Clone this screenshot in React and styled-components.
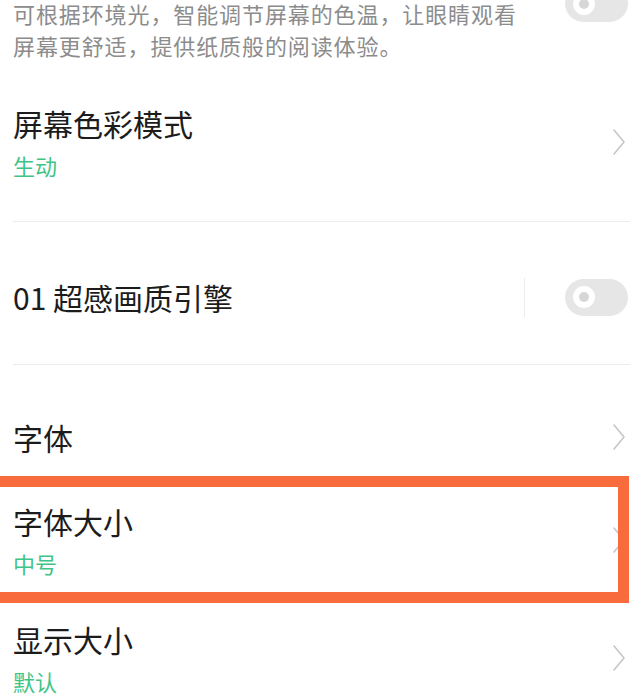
import React from "react";
import styled, { createGlobalStyle } from "styled-components";

const palette = {
  title: "#1c1c1c",
  desc: "#8c8c8c",
  green: "#3fc487",
  line: "#ececec",
  chevron: "#c6c6c6",
  track: "#e6e6e6",
  knobCore: "#d6d6d6",
  mark: "#f76b3c",
};

const GlobalStyle = createGlobalStyle`
  html, body {
    margin: 0;
    padding: 0;
    background: #fff;
    overflow: hidden;
  }
  body {
    font-family: "Noto Sans CJK SC", "Noto Sans", sans-serif;
  }
`;

const Chevron = () => (
  <svg width="14" height="28" viewBox="0 0 14 28" fill="none">
    <polyline
      points="2,2 12,14 2,26"
      stroke={palette.chevron}
      strokeWidth="1.6"
      strokeLinecap="round"
      strokeLinejoin="round"
    />
  </svg>
);

const items = [
  { title: "屏幕色彩模式", value: "生动", top: 42, bottom: 41, line: true },
  { title: "01 超感画质引擎", toggle: true, top: 55, bottom: 47, line: true },
  { title: "字体", top: 52, bottom: 24 },
  { title: "字体大小", value: "中号", top: 19, bottom: 18, line: true, marked: true },
  { title: "显示大小", value: "默认", top: 22, bottom: 10 },
];

const App = () => {
  return (
    <>
      <GlobalStyle />
      <Page>
        <DescRow>
          <Desc>
            可根据环境光，智能调节屏幕的色温，让眼睛观看
            <br />
            屏幕更舒适，提供纸质般的阅读体验。
          </Desc>
          <TopSwitch>
            <Switch />
          </TopSwitch>
        </DescRow>
        {items.map((item) => (
          <Item
            key={item.title}
            $top={item.top}
            $bottom={item.bottom}
            $line={item.line}
            $marked={item.marked}
          >
            <TextBox>
              <Title>{item.title}</Title>
              {item.value && <Value>{item.value}</Value>}
            </TextBox>
            {item.toggle ? (
              <ToggleBox>
                <Separator />
                <Switch />
              </ToggleBox>
            ) : (
              <Chevron />
            )}
          </Item>
        ))}
      </Page>
    </>
  );
};

const Switch = () => (
  <Track>
    <Knob />
  </Track>
);

const Page = styled.div`
  width: 630px;
  padding-left: 13px;
  box-sizing: border-box;
`;

const DescRow = styled.div`
  display: flex;
  justify-content: space-between;
  align-items: flex-start;
  margin-top: -3px;
  padding-right: 2px;
`;

const Desc = styled.p`
  margin: 0;
  font-size: 22px;
  line-height: 32px;
  letter-spacing: 0.9px;
  color: ${palette.desc};
`;

const TopSwitch = styled.div`
  margin-top: -12px;
`;

const Item = styled.div`
  position: relative;
  display: flex;
  align-items: center;
  justify-content: space-between;
  padding: ${(p) => p.$top}px 4px ${(p) => p.$bottom}px 0;
  border-bottom: 1px solid ${(p) => (p.$line ? palette.line : "transparent")};

  ${(p) =>
    p.$marked &&
    `
    &::after {
      content: "";
      position: absolute;
      top: -6px;
      bottom: -7px;
      left: -40px;
      right: 1px;
      border: 11px solid ${palette.mark};
      pointer-events: none;
    }
  `}
`;

const TextBox = styled.div`
  display: flex;
  flex-direction: column;
  gap: 7px;
`;

const Title = styled.span`
  font-size: 30px;
  line-height: 40px;
  color: ${palette.title};
`;

const Value = styled.span`
  font-size: 22px;
  line-height: 30px;
  color: ${palette.green};
`;

const ToggleBox = styled.div`
  display: flex;
  align-items: center;
  gap: 40px;
  margin-right: -2px;
`;

const Separator = styled.div`
  width: 1px;
  height: 39px;
  background: ${palette.line};
`;

const Track = styled.div`
  width: 63px;
  height: 37px;
  border-radius: 19px;
  background: ${palette.track};
  display: flex;
  align-items: center;
  padding-left: 8px;
  box-sizing: border-box;
`;

const Knob = styled.div`
  width: 22px;
  height: 22px;
  border-radius: 50%;
  background: #fff;
  display: flex;
  align-items: center;
  justify-content: center;

  &::before {
    content: "";
    width: 10px;
    height: 10px;
    border-radius: 50%;
    background: ${palette.knobCore};
  }
`;

export default App;
